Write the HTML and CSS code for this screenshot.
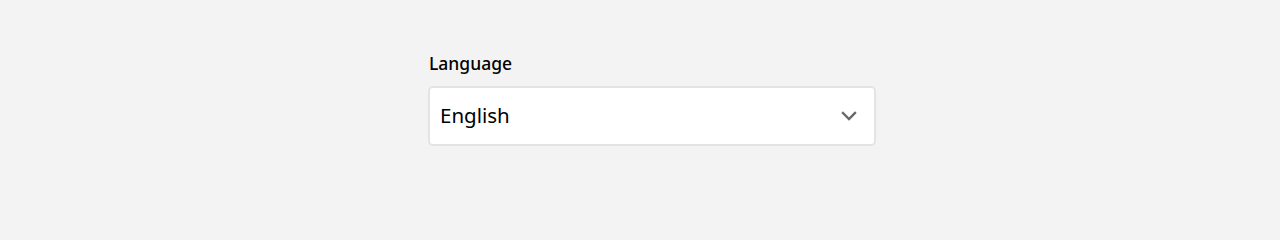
FILE: index.html
```html
<!DOCTYPE html>
<html lang="en">
<head>
<meta charset="utf-8">
<title>Language</title>
<link rel="stylesheet" href="styles.css">
</head>
<body>
<main class="page">
  <div class="field">
    <label class="field-label" for="lang">Language</label>
    <div class="select">
      <span class="select-value" id="lang">English</span>
      <svg class="select-chevron" width="18" height="12" viewBox="0 0 18 12" aria-hidden="true">
        <path d="M3 3 L9 9 L15 3" fill="none" stroke="#666" stroke-width="2.3" stroke-linecap="square"/>
      </svg>
    </div>
  </div>
</main>
</body>
</html>
```
FILE: styles.css
```css
html, body {
  margin: 0;
  padding: 0;
  background: #f3f3f3;
  font-family: "Noto Sans", "Open Sans", "Liberation Sans", sans-serif;
  color: #000;
}
.page {
  height: 205px;
  padding: 50px 0 0 428px;
  box-sizing: border-box;
}
.field {
  width: 448px;
  display: flex;
  flex-direction: column;
  gap: 10px;
}
.field-label {
  font-size: 17.5px;
  font-weight: 500;
  line-height: 26px;
  padding-left: 1px;
  color: #000;
}
.select {
  height: 60px;
  box-sizing: border-box;
  background: #fff;
  border: 2px solid #e4e4e4;
  border-radius: 5px;
  display: flex;
  align-items: center;
  justify-content: space-between;
  padding: 0 16px 2px 10px;
}
.select-value {
  font-size: 20.5px;
  line-height: 28px;
  color: #000;
}
.select-chevron {
  display: block;
  margin-top: 2px;
}
```
